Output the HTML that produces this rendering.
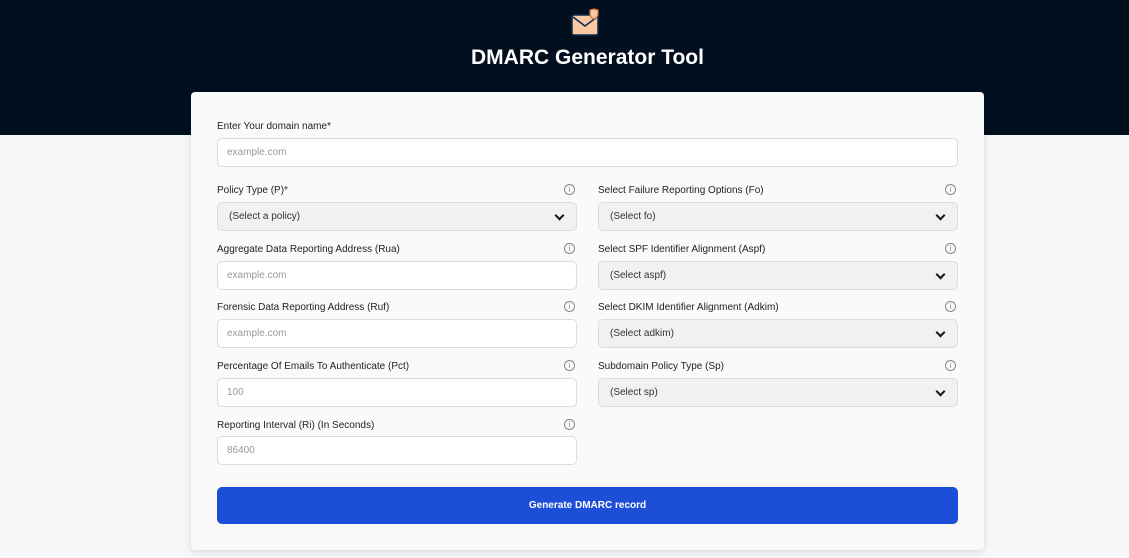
<!DOCTYPE html><html><head><style>
*{box-sizing:border-box;margin:0;padding:0}
body{width:1129px;height:558px;background:#f7f7f7;font-family:"Liberation Sans",sans-serif;position:relative;overflow:hidden}
.hdr{position:absolute;left:0;top:0;width:1129px;height:135px;background:#020f1f}
h1{position:absolute;top:46px;left:23px;width:1129px;text-align:center;color:#fff;font-size:21px;font-weight:bold;letter-spacing:0px}
.card{position:absolute;left:191px;top:92px;width:793px;height:458px;background:#fafafa;border-radius:4px;box-shadow:0 2px 8px rgba(0,0,0,.12)}
.l{position:absolute;font-size:10px;color:#222;margin-top:1px}
.f{position:absolute;height:29px;border:1px solid #dcdcdc;border-radius:5px;background:#fff;font-size:10px;color:#999;padding:0 9px;line-height:27px}
.s{background:#f1f1f1;color:#333;padding-left:11px}
.s:after{content:"";position:absolute;right:13px;top:9px;width:5px;height:5px;border-right:2px solid #111;border-bottom:2px solid #111;transform:rotate(45deg)}
.i{position:absolute;width:11px;height:11px;border:1px solid #888;border-radius:50%;font-size:8px;color:#888;text-align:center;line-height:9px}
.btn{position:absolute;left:217px;top:487px;width:741px;height:37px;background:#1d4ed8;border-radius:5px;color:#fff;font-size:10px;font-weight:bold;text-align:center;line-height:37px}
</style></head><body>
<div class="hdr"></div>
<svg style="position:absolute;left:570px;top:8px" width="32" height="30" viewBox="0 0 32 30"><rect x="2" y="7" width="26" height="20" rx="2" fill="#f9c9a3" stroke="#0d2a4a" stroke-width="1.5"/><path d="M3 9l12 9 12-9" fill="none" stroke="#0d2a4a" stroke-width="1.5"/><path d="M20 2l4-1 4 1v4c0 3-2 4-4 5-2-1-4-2-4-5z" fill="#f9c9a3" stroke="#c8763a" stroke-width="1.2"/></svg>
<h1>DMARC Generator Tool</h1>
<div class="card"></div>
<div class="l" style="left:217px;top:120px">Enter Your domain name*</div>
<div class="f" style="left:217px;top:138px;width:741px">example.com</div>

<div class="l" style="left:217px;top:184px">Policy Type (P)*</div><div class="i" style="left:564px;top:184px">i</div>
<div class="f s" style="left:217px;top:202px;width:360px">(Select a policy)</div>
<div class="l" style="left:217px;top:243px">Aggregate Data Reporting Address (Rua)</div><div class="i" style="left:564px;top:243px">i</div>
<div class="f" style="left:217px;top:261px;width:360px">example.com</div>
<div class="l" style="left:217px;top:301px">Forensic Data Reporting Address (Ruf)</div><div class="i" style="left:564px;top:301px">i</div>
<div class="f" style="left:217px;top:319px;width:360px">example.com</div>
<div class="l" style="left:217px;top:360px">Percentage Of Emails To Authenticate (Pct)</div><div class="i" style="left:564px;top:360px">i</div>
<div class="f" style="left:217px;top:378px;width:360px">100</div>
<div class="l" style="left:217px;top:419px">Reporting Interval (Ri) (In Seconds)</div><div class="i" style="left:564px;top:419px">i</div>
<div class="f" style="left:217px;top:436px;width:360px">86400</div>

<div class="l" style="left:598px;top:184px">Select Failure Reporting Options (Fo)</div><div class="i" style="left:945px;top:184px">i</div>
<div class="f s" style="left:598px;top:202px;width:360px">(Select fo)</div>
<div class="l" style="left:598px;top:243px">Select SPF Identifier Alignment (Aspf)</div><div class="i" style="left:945px;top:243px">i</div>
<div class="f s" style="left:598px;top:261px;width:360px">(Select aspf)</div>
<div class="l" style="left:598px;top:301px">Select DKIM Identifier Alignment (Adkim)</div><div class="i" style="left:945px;top:301px">i</div>
<div class="f s" style="left:598px;top:319px;width:360px">(Select adkim)</div>
<div class="l" style="left:598px;top:360px">Subdomain Policy Type (Sp)</div><div class="i" style="left:945px;top:360px">i</div>
<div class="f s" style="left:598px;top:378px;width:360px">(Select sp)</div>

<div class="btn">Generate DMARC record</div>
</body></html>
